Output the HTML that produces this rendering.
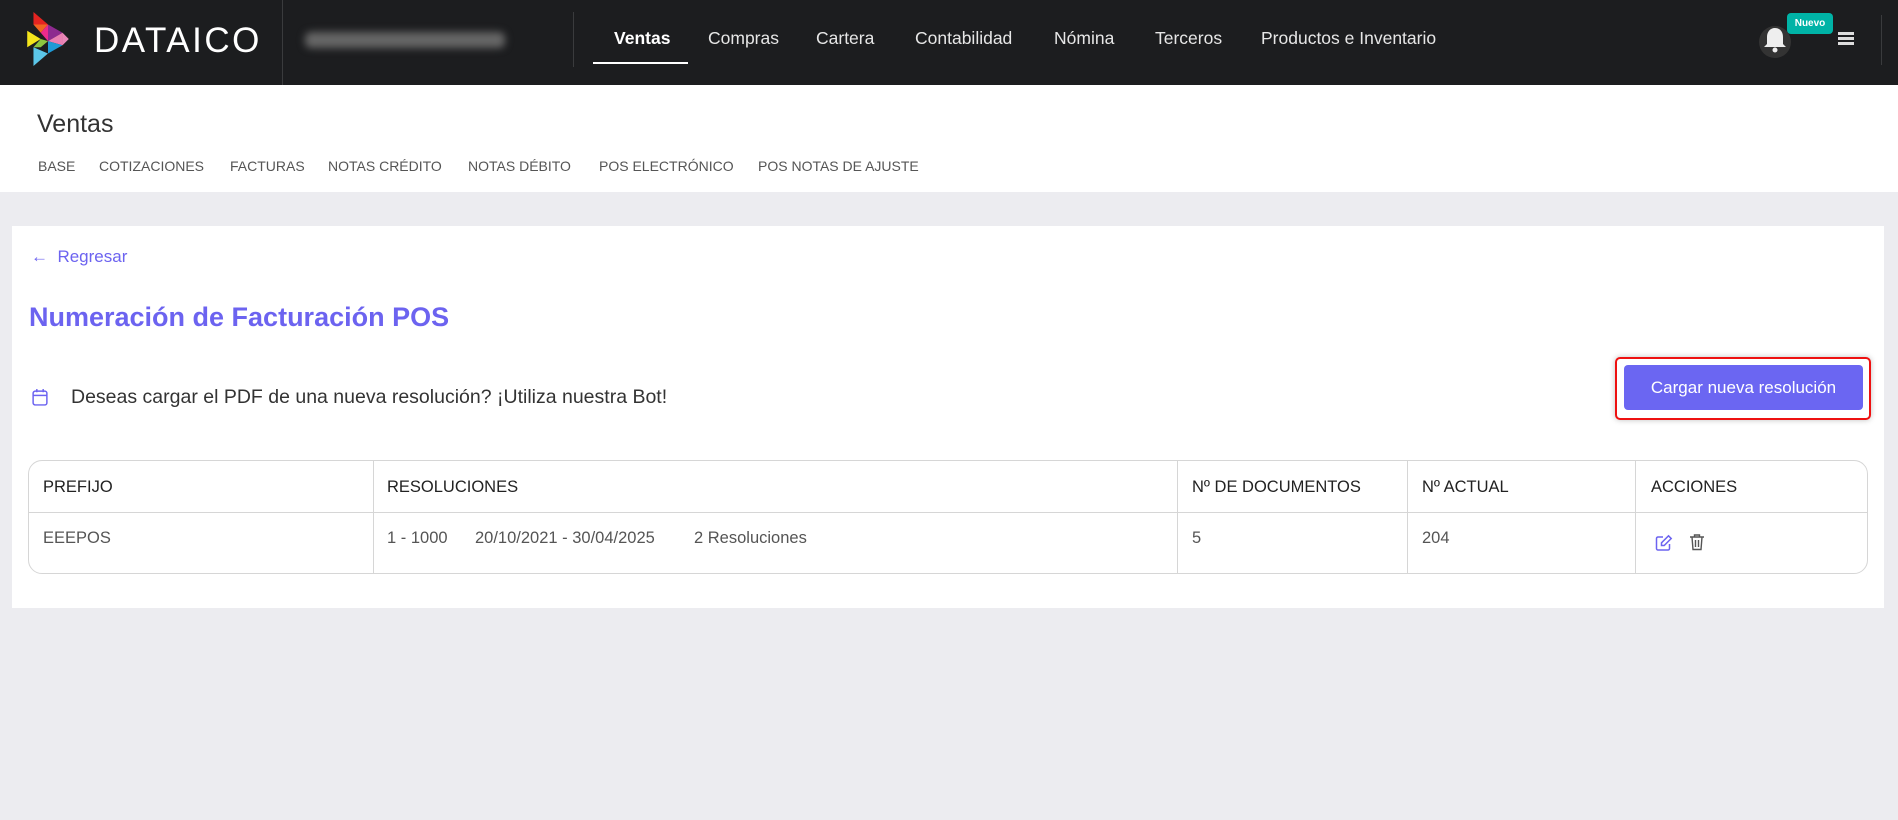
<!DOCTYPE html><html><head><meta charset="utf-8"><style>
*{box-sizing:border-box;margin:0;padding:0}
body{width:1898px;height:820px;background:#ececf0;font-family:"Liberation Sans",sans-serif;position:relative;overflow:hidden}
.a{position:absolute;white-space:nowrap}
.hdr{position:absolute;left:0;top:0;width:1898px;height:85px;background:#1c1d1f}
.nav{font-size:17.5px;color:#e6e6e6;top:28px}
.sub{position:absolute;left:0;top:85px;width:1898px;height:107px;background:#fff}
.tab{font-size:14px;color:#555;top:158px}
.card{position:absolute;left:12px;top:226px;width:1872px;height:382px;background:#fff}
.tbl{position:absolute;left:28px;top:460px;width:1840px;height:114px;border:1px solid #d6d6d6;border-radius:14px;overflow:hidden}
.vl{position:absolute;top:0;width:1px;height:114px;background:#d6d6d6}
.th{font-size:16.5px;color:#222;top:17px}
.td{font-size:16.5px;color:#555;top:68px}
</style></head><body>
<div class="hdr">
<svg class="a" style="left:22px;top:12px" width="52" height="54" viewBox="0 0 40 52">
<polygon points="6,0 20,12 6,12" fill="#e52421"/><polygon points="6,12 20,12 13,20" fill="#f26522"/>
<polygon points="20,12 34,20 20,28" fill="#8e2a8f"/><polygon points="20,12 13,20 20,28" fill="#ec2a8c"/>
<polygon points="34,20 40,26 34,32" fill="#e987b8"/><polygon points="20,28 34,20 34,32" fill="#ea7fb3"/>
<polygon points="0,18 13,26 0,34" fill="#f4e51b"/><polygon points="13,26 20,28 13,34 6,34" fill="#8dc63f"/>
<polygon points="20,28 34,32 20,40" fill="#1f9ad6"/><polygon points="6,34 20,40 6,52" fill="#5bc6e8"/>
</svg>
<div class="a" style="left:94px;top:21px;font-size:35px;color:#fff;letter-spacing:2.5px;font-weight:300">DATAICO</div>
<div class="a" style="left:282px;top:0;width:1px;height:85px;background:#3a3b3d"></div>
<div class="a" style="left:305px;top:32px;width:200px;height:16px;background:#666;border-radius:6px;filter:blur(4px)"></div>
<div class="a" style="left:573px;top:12px;width:1px;height:55px;background:#3a3b3d"></div>
<div class="a nav" style="left:614px;color:#fff;font-weight:bold">Ventas</div>
<div class="a" style="left:593px;top:62px;width:95px;height:2px;background:#fff"></div>
<div class="a nav" style="left:708px">Compras</div>
<div class="a nav" style="left:816px">Cartera</div>
<div class="a nav" style="left:915px">Contabilidad</div>
<div class="a nav" style="left:1054px">Nómina</div>
<div class="a nav" style="left:1155px">Terceros</div>
<div class="a nav" style="left:1261px">Productos e Inventario</div>
<div class="a" style="left:1759px;top:26px;width:32px;height:32px;border-radius:50%;background:#333"></div>
<svg class="a" style="left:1762px;top:26px" width="26" height="28" viewBox="0 0 26 28"><path d="M13 2c-5 0-8 4-8 9v7l-3 3h22l-3-3v-7c0-5-3-9-8-9z" fill="#eee"/><circle cx="13" cy="24" r="2.5" fill="#eee"/></svg>
<div class="a" style="left:1787px;top:13px;width:46px;height:21px;border-radius:4px;background:#00b3a6;color:#fff;font-size:10px;font-weight:bold;text-align:center;line-height:21px">Nuevo</div>
<div class="a" style="left:1838px;top:32px;width:16px;height:3px;background:#ddd;box-shadow:0 5px 0 #ddd,0 10px 0 #ddd"></div>
<div class="a" style="left:1881px;top:15px;width:1px;height:50px;background:#3a3b3d"></div>
</div>
<div class="sub">
<div class="a" style="left:37px;top:25px;font-size:25px;color:#333;font-weight:300">Ventas</div>
</div>
<div class="a tab" style="left:38px">BASE</div>
<div class="a tab" style="left:99px">COTIZACIONES</div>
<div class="a tab" style="left:230px">FACTURAS</div>
<div class="a tab" style="left:328px">NOTAS CRÉDITO</div>
<div class="a tab" style="left:468px">NOTAS DÉBITO</div>
<div class="a tab" style="left:599px">POS ELECTRÓNICO</div>
<div class="a tab" style="left:758px">POS NOTAS DE AJUSTE</div>
<div class="card"></div>
<div class="a" style="left:31px;top:247px;font-size:17px;color:#6c63f0">←&nbsp;&nbsp;Regresar</div>
<div class="a" style="left:29px;top:302px;font-size:27px;color:#6c63f0;font-weight:bold">Numeración de Facturación POS</div>
<svg class="a" style="left:32px;top:388px" width="16" height="18" viewBox="0 0 15 17"><rect x="1" y="3" width="13" height="13" rx="2" fill="none" stroke="#6c63f0" stroke-width="1.4"/><line x1="1" y1="7" x2="14" y2="7" stroke="#6c63f0" stroke-width="1.4"/><line x1="4.5" y1="1" x2="4.5" y2="4" stroke="#6c63f0" stroke-width="1.4"/><line x1="10.5" y1="1" x2="10.5" y2="4" stroke="#6c63f0" stroke-width="1.4"/></svg>
<div class="a" style="left:71px;top:386px;font-size:19.5px;color:#333;font-weight:300">Deseas cargar el PDF de una nueva resolución? ¡Utiliza nuestra Bot!</div>
<div class="a" style="left:1615px;top:357px;width:256px;height:63px;border:2px solid #e11;border-radius:5px;box-shadow:0 0 6px rgba(0,0,0,.25)"></div>
<div class="a" style="left:1624px;top:365px;width:239px;height:45px;border-radius:4px;background:#6b66f2;color:#fff;font-size:17px;text-align:center;line-height:45px">Cargar nueva resolución</div>
<div class="tbl">
<div class="a" style="left:0;top:51px;width:1840px;height:1px;background:#d6d6d6"></div>
<div class="vl" style="left:344px"></div><div class="vl" style="left:1148px"></div><div class="vl" style="left:1378px"></div><div class="vl" style="left:1606px"></div>
<div class="a th" style="left:14px">PREFIJO</div>
<div class="a th" style="left:358px">RESOLUCIONES</div>
<div class="a th" style="left:1163px">Nº DE DOCUMENTOS</div>
<div class="a th" style="left:1393px">Nº ACTUAL</div>
<div class="a th" style="left:1622px">ACCIONES</div>
<div class="a td" style="left:14px">EEEPOS</div>
<div class="a td" style="left:358px">1 - 1000</div>
<div class="a td" style="left:446px">20/10/2021 - 30/04/2025</div>
<div class="a td" style="left:665px">2 Resoluciones</div>
<div class="a td" style="left:1163px">5</div>
<div class="a td" style="left:1393px">204</div>
<svg class="a" style="left:1626px;top:73px" width="18" height="18" viewBox="0 0 18 18"><path d="M8 3H3a1.5 1.5 0 0 0-1.5 1.5v10A1.5 1.5 0 0 0 3 16h10a1.5 1.5 0 0 0 1.5-1.5V10" fill="none" stroke="#6c63f0" stroke-width="1.5"/><path d="M13.5 1.8l2.7 2.7-7 7H6.5V8.8z" fill="none" stroke="#6c63f0" stroke-width="1.5"/></svg>
<svg class="a" style="left:1660px;top:72px" width="16" height="18" viewBox="0 0 16 18"><path d="M1 4h14M5.5 4V2h5v2M3 4l1 12.5h8L13 4M6.5 7v7M9.5 7v7" fill="none" stroke="#555" stroke-width="1.4"/></svg>
</div>
</body></html>
